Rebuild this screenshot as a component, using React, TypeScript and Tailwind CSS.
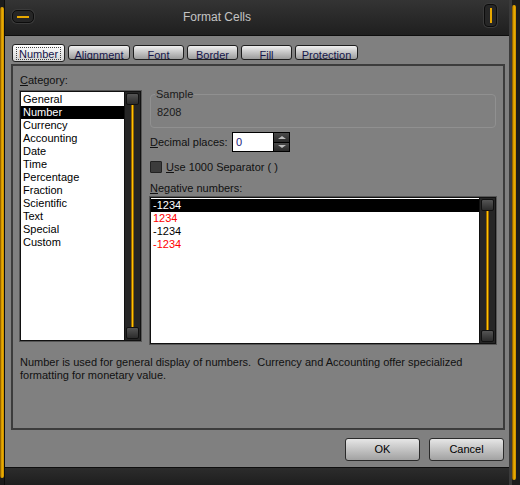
import React from 'react'

const font = { fontFamily: '"Liberation Sans", Arial, sans-serif' }

const tabs = [
  { label: 'Number', w: 'w-[53px]', active: true },
  { label: 'Alignment', w: 'w-[62px]' },
  { label: 'Font', w: 'w-[51px]' },
  { label: 'Border', w: 'w-[51px]' },
  { label: 'Fill', w: 'w-[51px]' },
  { label: 'Protection', w: 'w-[63px]' },
]

const categories = [
  'General',
  'Number',
  'Currency',
  'Accounting',
  'Date',
  'Time',
  'Percentage',
  'Fraction',
  'Scientific',
  'Text',
  'Special',
  'Custom',
]

const negatives = [
  { v: '-1234', red: false },
  { v: '1234', red: true },
  { v: '-1234', red: false },
  { v: '-1234', red: true },
]

function Knob() {
  return (
    <div className="h-[12px] mx-[1px] rounded-[2px] border border-[#111] bg-gradient-to-b from-[#555] to-[#2c2c2c]" />
  )
}

function ScrollBar() {
  return (
    <div className="flex w-[16px] flex-col bg-[#262626] border-l border-[#111] py-[1px]">
      <Knob />
      <div className="flex flex-1 justify-center">
        <div className="w-[3px] bg-gradient-to-r from-[#6a3e00] via-[#ffc400] to-[#6a3e00]" />
      </div>
      <Knob />
    </div>
  )
}

function Ul({ c }: { c: string }) {
  return <span className="underline underline-offset-[1px]">{c}</span>
}

export default function App() {
  return (
    <div className="flex h-[485px] w-[520px] bg-[#1c1c1c] text-[11px] text-[#111]" style={font}>
      {/* left window edge */}
      <div className="flex w-[5px] flex-col py-[7px] border-r border-[#0d0d0d]">
        <div className="flex-1 w-[4px] rounded-full bg-gradient-to-r from-[#7a4c00] via-[#f2b500] to-[#c88a00]" />
      </div>

      <div className="flex flex-1 flex-col">
        {/* title bar */}
        <div className="flex h-[36px] items-start bg-gradient-to-b from-[#343434] to-[#1f1f1f] border-b border-[#0e0e0e]">
          <div className="mt-[10px] ml-[7px] flex h-[13px] w-[22px] items-center justify-center rounded-[5px] border border-[#0c0c0c] bg-[#262626] shadow-[0_0_0_1px_#3a3a3a]">
            <div className="h-[2px] w-[12px] bg-[#e8a800]" />
          </div>
          <div className="mt-[10px] ml-[149px] text-[12px] leading-[14px] text-[#c4c4c4]">Format Cells</div>
          <div className="ml-auto mr-[12px] mt-[4px] flex h-[23px] w-[13px] justify-center rounded-[4px] border border-[#0c0c0c] bg-[#262626] py-[3px] shadow-[0_0_0_1px_#3a3a3a]">
            <div className="w-[2px] bg-[#e8a800]" />
          </div>
        </div>

        {/* body */}
        <div className="flex flex-1 flex-col bg-[#808080]">
          {/* tabs */}
          <div className="mt-[8px] flex h-[17px] items-start gap-[2px] pl-[7px]">
            {tabs.map((t) =>
              t.active ? (
                <div
                  key={t.label}
                  className={`${t.w} h-[18px] rounded-[3px] border border-[#222] bg-gradient-to-b from-[#ffffff] to-[#d4d4d4] px-[3px] pt-[2px]`}
                >
                  <div className="h-[13px] border border-dotted border-[#444] text-center leading-[12px] text-[#15154a]">
                    {t.label}
                  </div>
                </div>
              ) : (
                <div
                  key={t.label}
                  className={`${t.w} mt-[1px] ml-[1px] h-[15px] overflow-hidden rounded-[3px] border border-[#1e1e1e] bg-gradient-to-b from-[#f0f0f0] to-[#9c9c9c] pt-[3px] text-center leading-[13px] text-[#15154a]`}
                >
                  {t.label}
                </div>
              ),
            )}
          </div>

          {/* tab panel */}
          <div className="mt-[3px] ml-[6px] mr-[4px] flex h-[366px] flex-col border-2 border-[#3c3c3c] px-[7px]">
            <div className="flex gap-[9px]">
              {/* category */}
              <div className="flex w-[121px] flex-col pt-[8px]">
                <div className="h-[13px] leading-[13px]">
                  <Ul c="C" />
                  ategory:
                </div>
                <div className="mt-[4px] flex h-[250px] border border-[#111] bg-white shadow-[0_0_0_1px_#555]">
                  <div className="flex-1 pt-[1px]">
                    {categories.map((c) => (
                      <div
                        key={c}
                        className={`h-[13px] pl-[2px] leading-[13px] ${c === 'Number' ? 'bg-black text-white' : 'text-black'}`}
                      >
                        {c}
                      </div>
                    ))}
                  </div>
                  <ScrollBar />
                </div>
              </div>

              {/* right column */}
              <div className="flex flex-1 flex-col pt-[22px]">
                <fieldset className="h-[40px] rounded-[4px] border border-[#909090] px-[4px]">
                  <legend className="px-[1px] leading-[13px] text-[#1a1a1a]">Sample</legend>
                  <div className="mt-[5px] pl-[2px] leading-[13px] text-[#1a1a1a]">8208</div>
                </fieldset>

                <div className="mt-[4px] flex h-[20px] items-center">
                  <div className="w-[82px] leading-[13px]">
                    <Ul c="D" />
                    ecimal places:
                  </div>
                  <div className="flex h-[20px] w-[42px] items-center border border-black bg-white pl-[3px] text-[#1a1a7a]">0</div>
                  <div className="flex h-[20px] w-[16px] flex-col border border-black border-l-0 bg-[#1a1a1a]">
                    <div className="flex flex-1 items-center justify-center border-b border-black bg-gradient-to-b from-[#4a4a4a] to-[#2a2a2a]">
                      <div className="h-0 w-0 border-x-[4px] border-b-[3px] border-x-transparent border-b-[#bbb]" />
                    </div>
                    <div className="flex flex-1 items-center justify-center bg-gradient-to-b from-[#4a4a4a] to-[#2a2a2a]">
                      <div className="h-0 w-0 border-x-[4px] border-t-[3px] border-x-transparent border-t-[#bbb]" />
                    </div>
                  </div>
                </div>

                <div className="mt-[8px] flex h-[14px] items-center gap-[4px]">
                  <div className="h-[12px] w-[12px] rounded-[1px] border border-[#222] bg-[#3c3c3c]" />
                  <div className="leading-[13px]">
                    <Ul c="U" />
                    se 1000 Separator ( )
                  </div>
                </div>

                <div className="mt-[8px] h-[13px] leading-[13px]">
                  <Ul c="N" />
                  egative numbers:
                </div>

                <div className="mt-[2px] flex h-[147px] border border-[#111] bg-white shadow-[0_0_0_1px_#555]">
                  <div className="flex-1 pt-[1px]">
                    {negatives.map((n, i) => (
                      <div
                        key={i}
                        className={`h-[13px] pl-[2px] leading-[13px] ${i === 0 ? 'bg-black text-white' : n.red ? 'text-[#ff0000]' : 'text-black'}`}
                      >
                        {n.v}
                      </div>
                    ))}
                  </div>
                  <ScrollBar />
                </div>
              </div>
            </div>

            <div className="mt-[12px] leading-[13px] text-[#111]">
              Number is used for general display of numbers.&nbsp; Currency and Accounting offer specialized
              <br />
              formatting for monetary value.
            </div>
          </div>

          {/* buttons */}
          <div className="mt-[8px] flex justify-end gap-[9px] pr-[5px]">
            {['OK', 'Cancel'].map((b) => (
              <button
                key={b}
                className="flex h-[23px] w-[75px] items-center justify-center rounded-[3px] border border-[#2a2a2a] bg-gradient-to-b from-[#e6e6e6] to-[#a2a2a2] text-[11px] text-black"
              >
                {b}
              </button>
            ))}
          </div>
          <div className="flex-1" />
        </div>

        {/* bottom bar */}
        <div className="h-[18px] border-t border-[#0e0e0e] bg-gradient-to-b from-[#2c2c2c] to-[#1e1e1e]" />
      </div>

      {/* right window edge */}
      <div className="flex w-[11px] bg-[#1c1c1c]">
        <div className="w-[3px] bg-[#3a3a3a]" />
        <div className="flex flex-col py-[5px]">
          <div className="flex-1 w-[4px] rounded-full bg-gradient-to-r from-[#7a4c00] via-[#f2b500] to-[#c88a00]" />
        </div>
      </div>
    </div>
  )
}
